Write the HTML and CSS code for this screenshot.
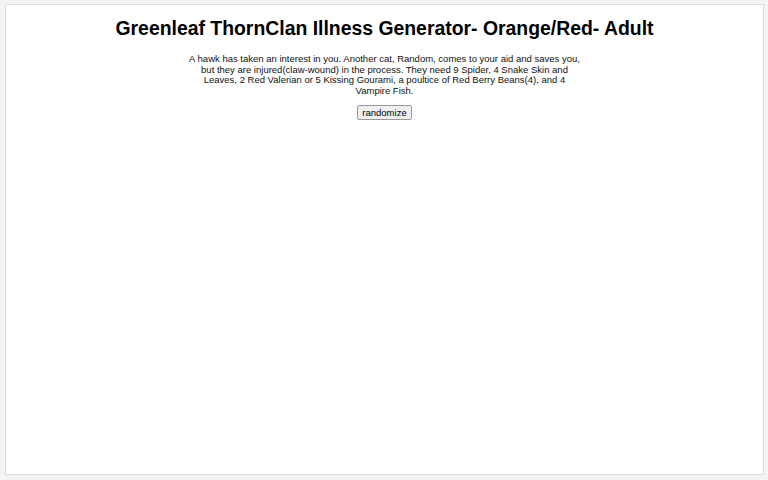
FILE: index.html
```html
<!DOCTYPE html>
<html>
<head>
<meta charset="utf-8">
<link rel="stylesheet" href="styles.css">
</head>
<body>
<div class="panel">
  <h1 class="title">Greenleaf ThornClan Illness Generator- Orange/Red- Adult</h1>
  <p class="story">A hawk has taken an interest in you. Another cat, Random, comes to your aid and saves you, but they are injured(claw-wound) in the process. They need 9 Spider, 4 Snake Skin and Leaves, 2 Red Valerian or 5 Kissing Gourami, a poultice of Red Berry Beans(4), and 4 Vampire Fish.</p>
  <div class="actions"><button class="btn">randomize</button></div>
</div>
</body>
</html>
```

FILE: styles.css
```css
html, body { margin: 0; padding: 0; }
body {
  background: #f3f3f3;
  font-family: "Liberation Sans", Arial, sans-serif;
  padding: 4px 4px 5px 5px;
  height: 480px;
  box-sizing: border-box;
}
.panel {
  background: #fff;
  border: 1px solid #dcdcdc;
  height: 100%;
  box-sizing: border-box;
  text-align: center;
}
.title {
  margin: 12px 0 0 0;
  font-size: 19.4px;
  font-weight: bold;
  color: #000;
  line-height: 22px;
}
.story {
  width: 393px;
  margin: 15px auto 0 auto;
  font-size: 9.5px;
  line-height: 10.67px;
  color: #111;
}
.actions { margin-top: 5px; }
.btn {
  font-family: "Liberation Sans", Arial, sans-serif;
  font-size: 9.5px;
  padding: 1px 4px;
  background: #f0f0f0;
  border: 1px solid #999;
  border-radius: 2px;
  color: #000;
}
```
